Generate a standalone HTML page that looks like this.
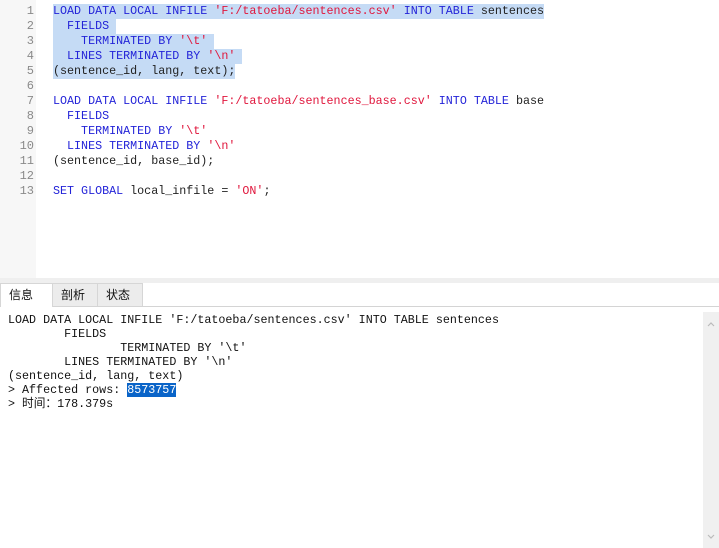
<!DOCTYPE html>
<html><head><meta charset="utf-8"><style>
body{margin:0;width:719px;height:548px;overflow:hidden;background:#fff;position:relative;font-family:"Liberation Mono","Noto Sans CJK SC",monospace;}
.gut{position:absolute;left:0;top:0;width:36px;height:278px;background:#f7f7f7;}
.l{position:absolute;height:15px;line-height:15px;font-size:11.7px;white-space:pre;color:#222;}
.n{position:absolute;width:34px;text-align:right;left:0;height:15px;line-height:15px;font-size:12px;color:#8a8a8a;}
.k{color:#2323d8}.s{color:#e0163c}
.sel{background:#c5dbf5}
.band{position:absolute;left:0;top:278px;width:719px;height:5px;background:#efefef;}
.tab{position:absolute;top:283px;height:23px;line-height:23px;font-size:12px;font-family:"Liberation Sans","Noto Sans CJK SC",sans-serif;background:#ececec;border:1px solid #d6d6d6;border-bottom:none;box-sizing:border-box;padding-left:8px;color:#111}
.line{position:absolute;left:0;top:306px;width:719px;height:1px;background:#d4d4d4;}
.o{position:absolute;left:8px;font-size:11.7px;line-height:14px;white-space:pre;color:#111;}
.sb{position:absolute;left:703px;top:312px;width:16px;height:236px;background:#f0f0f0;}
</style></head><body>
<div class="gut"></div>
<div class="n" style="top:4px">1</div><div class="n" style="top:19px">2</div><div class="n" style="top:34px">3</div><div class="n" style="top:49px">4</div><div class="n" style="top:64px">5</div><div class="n" style="top:79px">6</div><div class="n" style="top:94px">7</div><div class="n" style="top:109px">8</div><div class="n" style="top:124px">9</div><div class="n" style="top:139px">10</div><div class="n" style="top:154px">11</div><div class="n" style="top:169px">12</div><div class="n" style="top:184px">13</div>
<div class="l sel" style="left:53px;top:4px"><span class="k">LOAD DATA LOCAL INFILE </span><span class="s">'F:/tatoeba/sentences.csv'</span><span class="k"> INTO TABLE </span>sentences</div>
<div class="l sel" style="left:53px;top:19px"><span class="k">  FIELDS </span></div>
<div class="l sel" style="left:53px;top:34px"><span class="k">    TERMINATED BY </span><span class="s">'\t'</span> </div>
<div class="l sel" style="left:53px;top:49px"><span class="k">  LINES TERMINATED BY </span><span class="s">'\n'</span> </div>
<div class="l sel" style="left:53px;top:64px">(sentence_id, lang, text);</div>
<div class="l" style="left:53px;top:94px"><span class="k">LOAD DATA LOCAL INFILE </span><span class="s">'F:/tatoeba/sentences_base.csv'</span><span class="k"> INTO TABLE </span>base</div>
<div class="l" style="left:53px;top:109px"><span class="k">  FIELDS</span></div>
<div class="l" style="left:53px;top:124px"><span class="k">    TERMINATED BY </span><span class="s">'\t'</span></div>
<div class="l" style="left:53px;top:139px"><span class="k">  LINES TERMINATED BY </span><span class="s">'\n'</span></div>
<div class="l" style="left:53px;top:154px">(sentence_id, base_id);</div>
<div class="l" style="left:53px;top:184px"><span class="k">SET GLOBAL </span>local_infile = <span class="s">'ON'</span>;</div>
<div class="band"></div>
<div class="tab" style="left:97px;width:46px">状态</div>
<div class="tab" style="left:52px;width:46px">剖析</div>
<div class="line"></div>
<div class="tab" style="left:0;width:53px;background:#fff;height:24px">信息</div>
<div class="o" style="top:313px">LOAD DATA LOCAL INFILE 'F:/tatoeba/sentences.csv' INTO TABLE sentences
        FIELDS
                TERMINATED BY '\t'
        LINES TERMINATED BY '\n'
(sentence_id, lang, text)
&gt; Affected rows: <span style="background:#0a64c8;color:#fff">8573757</span>
&gt; 时间：178.379s</div>
<div class="sb"><svg width="16" height="236" style="position:absolute;left:0;top:0"><path d="M5 14 L8 11 L11 14" fill="none" stroke="#bbb" stroke-width="1.2"/><path d="M5 223 L8 226 L11 223" fill="none" stroke="#bbb" stroke-width="1.2"/></svg></div>
</body></html>
